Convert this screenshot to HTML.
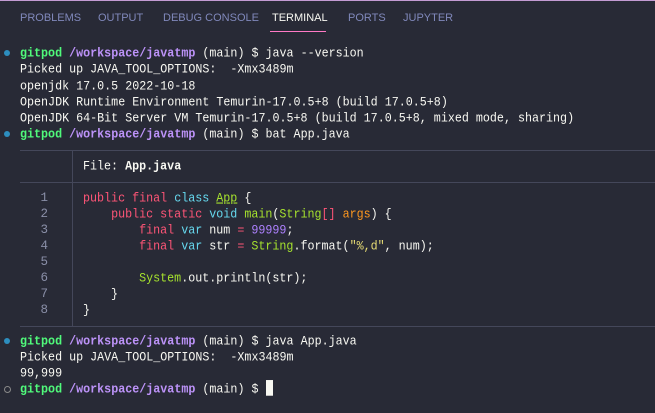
<!DOCTYPE html><html><head><style>
body{margin:0;width:655px;height:413px;background:#282a36;overflow:hidden;position:relative;font-family:"Liberation Mono",monospace;font-size:11.7px;color:#f8f8f2}
.top{position:absolute;left:0;top:0;width:655px;height:1px;background:#c39bd3}
.tab{position:absolute;top:12px;font-family:"Liberation Sans",sans-serif;font-size:11px;color:#8088bb}
.l{position:absolute;left:20px;height:16px;line-height:16px;white-space:pre;transform:scaleY(1.12);transform-origin:0 50%}
.dot{position:absolute;left:4px;width:6px;height:6px;border-radius:50%;background:#2d8ebf}
.g{color:#50fa7b;font-weight:bold}.p{color:#bd93f9;font-weight:bold}
.hr{position:absolute;left:20px;width:635px;height:1px;background:#44475a}
.k{color:#ff5577}.c{color:#66d9ef}.gr{color:#a6e22e}.o{color:#fd971f}.n{color:#ae81ff}.y{color:#e6db74}
.ln{position:absolute;left:20px;width:28px;text-align:right;color:#8a8fa8;height:16px;line-height:16px;font-size:12.5px}
.cd{position:absolute;left:83px;height:16px;line-height:16px;white-space:pre;transform:scaleY(1.12);transform-origin:0 50%}
</style></head><body>
<div class="top"></div>
<div class="tab" style="left:20px">PROBLEMS</div>
<div class="tab" style="left:98px">OUTPUT</div>
<div class="tab" style="left:163px">DEBUG CONSOLE</div>
<div class="tab" style="left:272px;color:#f8f8f2">TERMINAL</div>
<div style="position:absolute;left:270px;top:31px;width:56px;height:1px;background:#ff79c6"></div>
<div class="tab" style="left:348px">PORTS</div>
<div class="tab" style="left:403px">JUPYTER</div>

<div class="dot" style="top:50px"></div>
<div class="l" style="top:45px"><span class="g">gitpod</span> <span class="p">/workspace/javatmp</span> (main) $ java --version</div>
<div class="l" style="top:61px">Picked up JAVA_TOOL_OPTIONS:  -Xmx3489m</div>
<div class="l" style="top:78px">openjdk 17.0.5 2022-10-18</div>
<div class="l" style="top:94px">OpenJDK Runtime Environment Temurin-17.0.5+8 (build 17.0.5+8)</div>
<div class="l" style="top:110px">OpenJDK 64-Bit Server VM Temurin-17.0.5+8 (build 17.0.5+8, mixed mode, sharing)</div>
<div class="dot" style="top:131px"></div>
<div class="l" style="top:126px"><span class="g">gitpod</span> <span class="p">/workspace/javatmp</span> (main) $ bat App.java</div>

<div class="hr" style="top:150px"></div>
<div class="hr" style="top:182px"></div>
<div class="hr" style="top:326px"></div>
<div style="position:absolute;left:72px;top:150px;width:1px;height:176px;background:#44475a"></div>
<div class="cd" style="top:158px">File: <b>App.java</b></div>

<div class="ln" style="top:190px">1</div><div class="cd" style="top:190px"><span class="k">public final</span> <span class="c">class</span> <span class="gr" style="text-decoration:underline">App</span> {</div>
<div class="ln" style="top:206px">2</div><div class="cd" style="top:206px">    <span class="k">public static</span> <span class="c">void</span> <span class="gr">main</span>(<span class="gr">String</span><span class="k">[]</span> <span class="o">args</span>) {</div>
<div class="ln" style="top:222px">3</div><div class="cd" style="top:222px">        <span class="k">final</span> <span class="c">var</span> num <span class="k">=</span> <span class="n">99999</span>;</div>
<div class="ln" style="top:238px">4</div><div class="cd" style="top:238px">        <span class="k">final</span> <span class="c">var</span> str <span class="k">=</span> <span class="gr">String</span>.format(<span class="y">"%,d"</span>, num);</div>
<div class="ln" style="top:254px">5</div>
<div class="ln" style="top:270px">6</div><div class="cd" style="top:270px">        <span class="gr">System</span>.out.println(str);</div>
<div class="ln" style="top:286px">7</div><div class="cd" style="top:286px">    }</div>
<div class="ln" style="top:302px">8</div><div class="cd" style="top:302px">}</div>

<div class="dot" style="top:338px"></div>
<div class="l" style="top:333px"><span class="g">gitpod</span> <span class="p">/workspace/javatmp</span> (main) $ java App.java</div>
<div class="l" style="top:349px">Picked up JAVA_TOOL_OPTIONS:  -Xmx3489m</div>
<div class="l" style="top:365px">99,999</div>
<div class="dot" style="top:386px;background:none;border:1px solid #888;width:5px;height:5px"></div>
<div class="l" style="top:381px"><span class="g">gitpod</span> <span class="p">/workspace/javatmp</span> (main) $ <span style="display:inline-block;width:7px;height:14px;background:#f8f8f2;vertical-align:-3px"></span></div>
</body></html>
